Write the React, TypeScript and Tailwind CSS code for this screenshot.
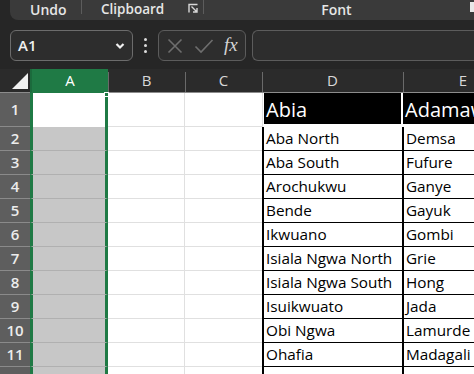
import React from "react";

const dataD = ["Aba North","Aba South","Arochukwu","Bende","Ikwuano","Isiala Ngwa North","Isiala Ngwa South","Isuikwuato","Obi Ngwa","Ohafia"];
const dataE = ["Demsa","Fufure","Ganye","Gayuk","Gombi","Grie","Hong","Jada","Lamurde","Madagali"];

export default function App() {
  const ui = { fontFamily: '"Open Sans", "Noto Sans", sans-serif' };
  const cell = { fontFamily: '"Open Sans", "Noto Sans", sans-serif' };
  return (
    <div className="w-[474px] h-[374px] overflow-hidden bg-[#262626] flex flex-col" style={ui}>
      {/* ribbon labels */}
      <div className="h-[20px] flex shrink-0">
        <div className="ml-[10px] flex-1 bg-[#3a3a3a] rounded-bl-[8px] flex items-center text-[14px] text-[#e6e6e6] font-semibold leading-none">
          <span className="ml-[20px] w-[36px]">Undo</span>
          <div className="ml-[15px] w-px h-[14px] self-start bg-[#5c5c5c]" />
          <span className="ml-[19px] text-[13.5px]">Clipboard</span>
          <svg className="ml-[24px] mt-[-4px]" width="11" height="11" viewBox="0 0 11 11">
            <path d="M1 9.5V1.5H9.5" fill="none" stroke="#d8d8d8" strokeWidth="1.4" />
            <path d="M3.5 3.5L9 9M9 5V9H5" fill="none" stroke="#d8d8d8" strokeWidth="1.4" />
          </svg>
          <div className="ml-[4px] w-px h-[14px] self-start bg-[#5c5c5c]" />
          <span className="ml-[117px]">Font</span>
          <div className="ml-auto mr-[0px] w-[4px] h-[10px] mt-[-6px] bg-[#e8e8e8]" />
        </div>
      </div>
      {/* formula bar */}
      <div className="h-[31px] mt-[10px] flex items-stretch shrink-0">
        <div className="ml-[10px] w-[123px] border border-[#6c6c6c] rounded-[6px] bg-[#2d2d2d] flex items-center px-[7px] text-[#f0f0f0] text-[15px]">
          <span className="font-semibold">A1</span>
          <svg className="ml-auto mr-[0px]" width="10" height="8" viewBox="0 0 10 8">
            <path d="M1.5 2L5 5.5L8.5 2" fill="none" stroke="#f0f0f0" strokeWidth="2.2" />
          </svg>
        </div>
        <div className="w-[25px] flex flex-col items-center justify-center gap-[3px]">
          <div className="w-[3px] h-[3px] rounded-full bg-[#dcdcdc]" />
          <div className="w-[3px] h-[3px] rounded-full bg-[#dcdcdc]" />
          <div className="w-[3px] h-[3px] rounded-full bg-[#dcdcdc]" />
        </div>
        <div className="w-[88px] border border-[#5c5c5c] rounded-[6px] bg-[#2d2d2d] flex items-center">
          <svg className="ml-[8px]" width="16" height="16" viewBox="0 0 16 16">
            <path d="M1.5 1.5L14.5 14.5M14.5 1.5L1.5 14.5" stroke="#6e6e6e" strokeWidth="1.6" />
          </svg>
          <svg className="ml-[11px]" width="20" height="16" viewBox="0 0 20 16">
            <path d="M1.5 8.5L7 14L18.5 2" fill="none" stroke="#6e6e6e" strokeWidth="1.6" />
          </svg>
          <span className="ml-[10px] text-[#d4d4d4] text-[19px] italic leading-none mt-[-2px]" style={{ fontFamily: '"Liberation Serif", "DejaVu Serif", serif' }}>fx</span>
        </div>
        <div className="ml-[6px] flex-1 border border-[#5c5c5c] border-r-0 rounded-l-[6px] bg-[#2d2d2d]" />
      </div>
      {/* grid */}
      <div className="mt-[8px] grid grid-cols-[30px_78px_77px_77px_141px_120px] grid-rows-[24px_34px_repeat(11,24px)] bg-white relative">
        {/* header row */}
        <div className="bg-[#2b2b2b] border-b border-[#8c8c8c] flex items-end justify-end pr-[2px] pb-[3px]">
          <svg width="16" height="16" viewBox="0 0 16 16"><path d="M16 0V16H0Z" fill="#f2f2f2" /></svg>
        </div>
        <div className="bg-[#1f7a45] border-b border-[#1f7a45] flex items-center justify-center text-white text-[15px] border-l-2 border-l-[#1b6a3c]">A</div>
        {["B", "C", "D", "E"].map((c) => (
          <div key={c} className="bg-[#2b2b2b] border-b border-[#8c8c8c] flex items-center justify-center text-[#d8d8d8] text-[15px] relative">
            {c}
            <div className="absolute left-0 top-[3px] bottom-0 w-px bg-[#6a6a6a]" />
          </div>
        ))}
        {/* rows */}
        {Array.from({ length: 12 }).map((_, i) => {
          const r = i + 1;
          const last = r === 12;
          return (
            <React.Fragment key={r}>
              <div className="bg-[#5e5e5e] border-b border-[#8a8a8a] flex items-center justify-center text-[#ececec] text-[15px] font-semibold">
                {last ? "" : r}
              </div>
              <div className={`${r === 1 ? "bg-white" : "bg-[#c7c7c7] border-b border-[#b0b0b0]"} border-l-[3px] border-l-[#1f7a45] border-r-[3px] border-r-[#1f7a45]`}>
                <div className={`h-full ${r === 1 ? "" : "mr-[1px] bg-[#c7c7c7]"}`} />
              </div>
              <div className="border-b border-r border-[#e0e0e0]" />
              <div className="border-b border-[#e0e0e0]" />
              {r === 1 ? (
                <>
                  <div className="border-l border-[#e0e0e0] pl-[1px] pb-[3px] pr-[2px]">
                    <div className="bg-black h-full text-white text-[20px] leading-none flex items-end pl-[2px] pb-[4px]" style={cell}>Abia</div>
                  </div>
                  <div className="pb-[3px]">
                    <div className="bg-black h-full text-white text-[20px] leading-none flex items-end pl-[2px] pb-[4px] whitespace-nowrap overflow-hidden" style={cell}>Adamawa</div>
                  </div>
                </>
              ) : (
                <>
                  <div className={`border-l-2 border-black border-r ${last ? "" : "border-b"} text-black text-[15.3px] leading-none flex items-end pl-[2px] pb-[4px] whitespace-nowrap overflow-hidden`} style={cell}>
                    {dataD[r - 2] ?? ""}
                  </div>
                  <div className={`border-l border-black ${last ? "" : "border-b"} text-black text-[15.3px] leading-none flex items-end pl-[2px] pb-[4px] whitespace-nowrap overflow-hidden`} style={cell}>
                    {dataE[r - 2] ?? ""}
                  </div>
                </>
              )}
            </React.Fragment>
          );
        })}
        <div className="absolute left-[104px] top-[23px] w-[5px] h-[5px] bg-[#1f7a45] border border-white" />
      </div>
    </div>
  );
}
